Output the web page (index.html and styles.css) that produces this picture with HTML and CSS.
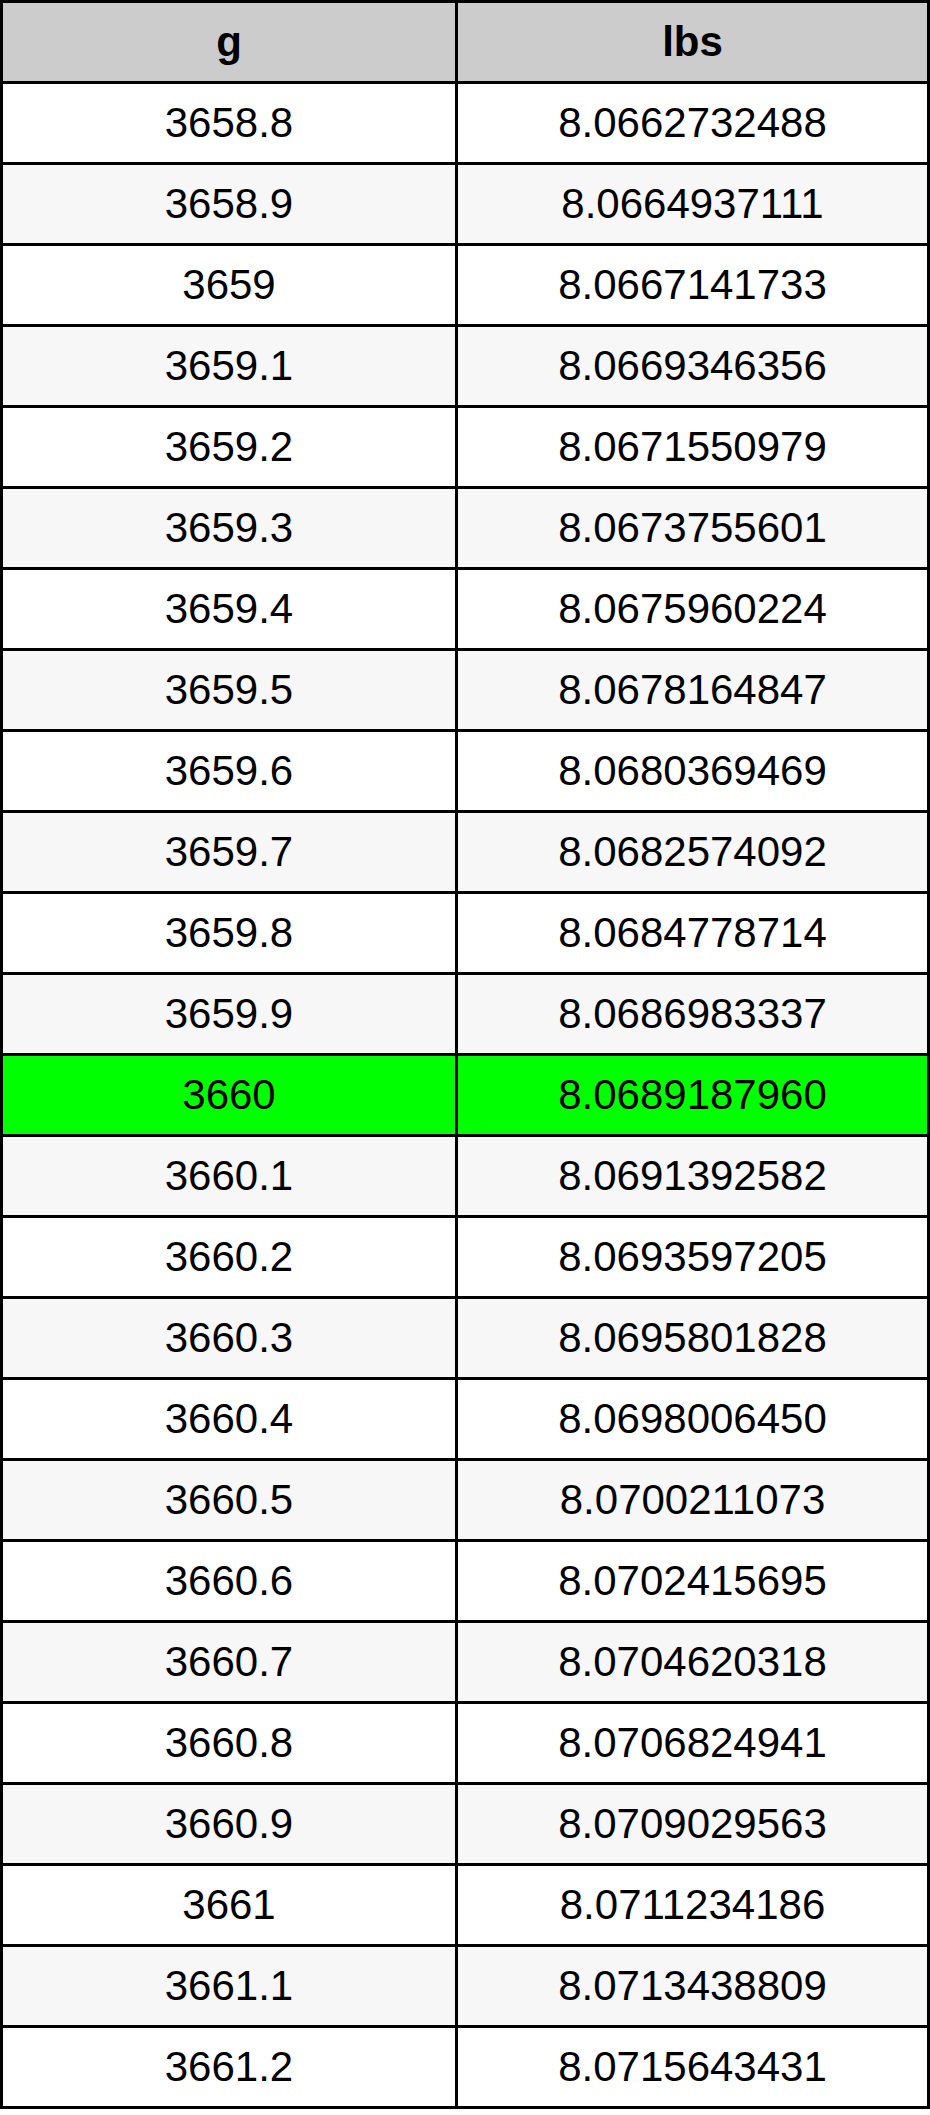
FILE: index.html
```
<!DOCTYPE html>
<html>
<head>
<meta charset="utf-8">
<link rel="stylesheet" href="styles.css">
</head>
<body>
<table class="conv">
<colgroup><col class="c1"><col class="c2"></colgroup>
<thead>
<tr><th>g</th><th>lbs</th></tr>
</thead>
<tbody>
<tr><td>3658.8</td><td>8.0662732488</td></tr>
<tr class="alt"><td>3658.9</td><td>8.0664937111</td></tr>
<tr><td>3659</td><td>8.0667141733</td></tr>
<tr class="alt"><td>3659.1</td><td>8.0669346356</td></tr>
<tr><td>3659.2</td><td>8.0671550979</td></tr>
<tr class="alt"><td>3659.3</td><td>8.0673755601</td></tr>
<tr><td>3659.4</td><td>8.0675960224</td></tr>
<tr class="alt"><td>3659.5</td><td>8.0678164847</td></tr>
<tr><td>3659.6</td><td>8.0680369469</td></tr>
<tr class="alt"><td>3659.7</td><td>8.0682574092</td></tr>
<tr><td>3659.8</td><td>8.0684778714</td></tr>
<tr class="alt"><td>3659.9</td><td>8.0686983337</td></tr>
<tr class="hl"><td>3660</td><td>8.0689187960</td></tr>
<tr class="alt"><td>3660.1</td><td>8.0691392582</td></tr>
<tr><td>3660.2</td><td>8.0693597205</td></tr>
<tr class="alt"><td>3660.3</td><td>8.0695801828</td></tr>
<tr><td>3660.4</td><td>8.0698006450</td></tr>
<tr class="alt"><td>3660.5</td><td>8.0700211073</td></tr>
<tr><td>3660.6</td><td>8.0702415695</td></tr>
<tr class="alt"><td>3660.7</td><td>8.0704620318</td></tr>
<tr><td>3660.8</td><td>8.0706824941</td></tr>
<tr class="alt"><td>3660.9</td><td>8.0709029563</td></tr>
<tr><td>3661</td><td>8.0711234186</td></tr>
<tr class="alt"><td>3661.1</td><td>8.0713438809</td></tr>
<tr><td>3661.2</td><td>8.0715643431</td></tr>
</tbody>
</table>
</body>
</html>
```
FILE: styles.css
```
html, body {
  margin: 0;
  padding: 0;
  background: #fff;
}
.conv {
  width: 930px;
  table-layout: fixed;
  border-collapse: separate;
  border-spacing: 3px;
  background: #000;
  font-family: "Liberation Sans", Arial, sans-serif;
  font-size: 42px;
  color: #000;
}
.c1 { width: 452px; }
.c2 { width: 469px; }
.conv th,
.conv td {
  height: 78px;
  padding: 0;
  text-align: center;
  vertical-align: middle;
  background: #fff;
  line-height: 48px;
}
.conv th {
  background: #cccccc;
  font-weight: bold;
}
.conv tr.alt td { background: #f7f7f7; }
.conv tr.hl td { background: #00ff00; }
```
